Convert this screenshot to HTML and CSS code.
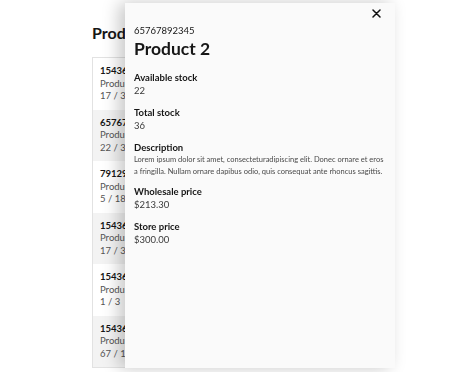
FILE: index.html
```html
<!doctype html>
<html>

<head>
	<title>Products</title>
	<link rel="stylesheet" href="styles.css">
</head>

<body>
	<div id="page">
		<h1 class="page-title">Products</h1>
		<ul class="product-list">
			<li class="product-row">
				<div class="row-code">15436078901</div>
				<div class="row-name">Product 1</div>
				<div class="row-stock">17 / 37</div>
			</li>
			<li class="product-row">
				<div class="row-code">65767892345</div>
				<div class="row-name">Product 2</div>
				<div class="row-stock">22 / 36</div>
			</li>
			<li class="product-row">
				<div class="row-code">79129655501</div>
				<div class="row-name">Product 3</div>
				<div class="row-stock">5 / 18</div>
			</li>
			<li class="product-row">
				<div class="row-code">15436078902</div>
				<div class="row-name">Product 4</div>
				<div class="row-stock">17 / 37</div>
			</li>
			<li class="product-row">
				<div class="row-code">15436078903</div>
				<div class="row-name">Product 5</div>
				<div class="row-stock">1 / 3</div>
			</li>
			<li class="product-row">
				<div class="row-code">15436078904</div>
				<div class="row-name">Product 6</div>
				<div class="row-stock">67 / 100</div>
			</li>
		</ul>
	</div>

	<aside class="drawer">
		<button class="drawer-close" type="button" aria-label="Close">
			<svg width="9" height="9" viewBox="0 0 9 9">
				<path d="M1 1 L8 8 M8 1 L1 8" stroke="#111" stroke-width="1.5" stroke-linecap="round" />
			</svg>
		</button>
		<div class="drawer-code">65767892345</div>
		<h2 class="drawer-title">Product 2</h2>

		<div class="field">
			<div class="field-label">Available stock</div>
			<div class="field-value">22</div>
		</div>
		<div class="field">
			<div class="field-label">Total stock</div>
			<div class="field-value">36</div>
		</div>
		<div class="field field-desc">
			<div class="field-label">Description</div>
			<div class="field-text">Lorem ipsum dolor sit amet, consecteturadipiscing elit. Donec ornare et eros
				a fringilla. Nullam ornare dapibus odio, quis consequat ante rhoncus sagittis.</div>
		</div>
		<div class="field">
			<div class="field-label">Wholesale price</div>
			<div class="field-value">$213.30</div>
		</div>
		<div class="field">
			<div class="field-label">Store price</div>
			<div class="field-value">$300.00</div>
		</div>
	</aside>
</body>

</html>
```

FILE: styles.css
```css
html,
body {
	margin: 0;
	background: #fff;
	color: #161616;
	font-family: Lato, "Noto Sans", sans-serif;
}

#page {
	padding: 22px 92px 0;
}

.page-title {
	margin: 0 0 13px;
	font-size: 16px;
	line-height: 22px;
	font-weight: 700;
}

.product-list {
	list-style: none;
	margin: 0;
	padding: 0;
	border: 1px solid #e2e2e2;
}

.product-row {
	padding: 7px;
	font-size: 9.5px;
	line-height: 12.5px;
}

.product-row:nth-child(even) {
	background: #f3f3f3;
}

.row-code {
	font-weight: 700;
}

.row-name,
.row-stock {
	color: #555;
}

.drawer {
	position: fixed;
	left: 125px;
	top: 3px;
	bottom: 4px;
	width: 252px;
	padding: 22px 9px 0;
	background: #fafafa;
	box-shadow: -6px 0 16px rgba(0, 0, 0, 0.22);
}

.drawer-close {
	position: absolute;
	top: 6px;
	right: 14px;
	padding: 0;
	width: 9px;
	height: 9px;
	border: 0;
	background: none;
}

.drawer-close svg {
	display: block;
}

.drawer-code {
	font-size: 9.5px;
	line-height: 12px;
}

.drawer-title {
	margin: 1px 0 11px;
	font-size: 17.5px;
	line-height: 22px;
	font-weight: 700;
}

.field {
	margin-bottom: 9px;
}

.field-desc {
	margin-bottom: 8px;
}

.field-label {
	font-size: 9.5px;
	line-height: 13px;
	font-weight: 700;
}

.field-value {
	font-size: 9.5px;
	line-height: 13px;
	color: #3a3a3a;
}

.field-text {
	font-size: 7.5px;
	line-height: 11.5px;
	color: #4a4a4a;
}
```
